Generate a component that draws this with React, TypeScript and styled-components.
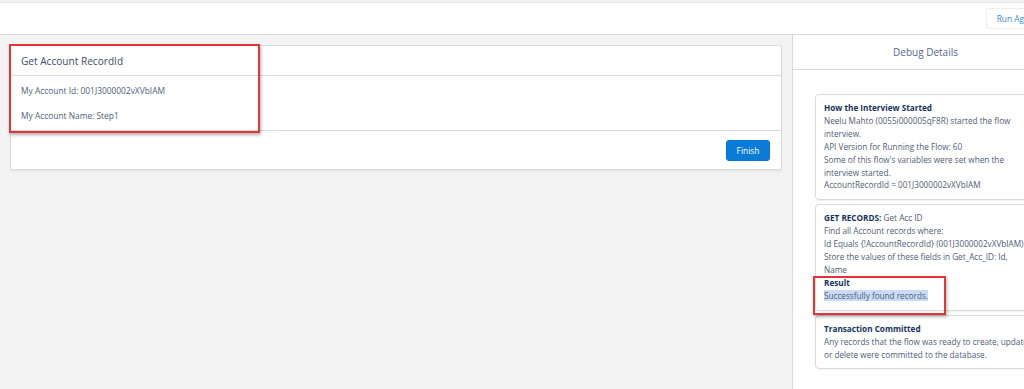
import React from "react";
import styled, { createGlobalStyle } from "styled-components";

const GlobalStyle = createGlobalStyle`
  html, body {
    margin: 0;
    padding: 0;
    background: #f3f3f3;
    overflow: hidden;
  }
  body {
    font-family: "Open Sans", "Noto Sans", "Liberation Sans", sans-serif;
  }
  * { box-sizing: border-box; }
`;

const Page = styled.div`
  width: 1058px;
  height: 389px;
  display: flex;
  flex-direction: column;
  background: #f3f3f3;
`;

const TopBar = styled.header`
  margin-top: 2px;
  height: 33px;
  flex: none;
  background: #fff;
  border-top: 1px solid #e4e4e4;
  border-bottom: 1px solid #dddbda;
  display: flex;
  align-items: center;
  justify-content: flex-end;
  padding-right: 11px;
`;

const RunButton = styled.button`
  height: 21px;
  padding: 0 10px;
  border: 1px solid #efeeed;
  border-radius: 3px;
  background: #fff;
  color: #3b8ce0;
  font-family: inherit;
  font-size: 8.4px;
  line-height: 19px;
`;

const Main = styled.main`
  flex: 1;
  display: grid;
  grid-template-columns: 792px 266px;
  min-height: 0;
`;

const LeftArea = styled.section`
  padding: 10px;
  align-self: start;
`;

const Card = styled.div`
  position: relative;
  background: #fff;
  border: 1px solid #dddbda;
  border-radius: 2px;
  box-shadow: 0 2px 2px rgba(0, 0, 0, 0.05);
`;

const CardHeader = styled.div`
  height: 30px;
  padding: 0 10px;
  display: flex;
  align-items: center;
  border-bottom: 1px solid #dddbda;
  font-size: 10.1px;
  color: #3e4d66;
`;

const CardBody = styled.div`
  padding: 8px 10px;
  display: flex;
  flex-direction: column;
  gap: 12px;
  border-bottom: 1px solid #dddbda;
`;

const Field = styled.div`
  font-size: 8.4px;
  line-height: 13px;
  color: #4f5e78;
  white-space: nowrap;
`;

const CardFooter = styled.div`
  padding: 9px 11px 8px;
  display: flex;
  justify-content: flex-end;
`;

const FinishButton = styled.button`
  width: 44px;
  height: 21px;
  padding: 0;
  border: 1px solid #0176d3;
  border-radius: 3px;
  background: #0b7bd8;
  color: #fff;
  font-family: inherit;
  font-size: 8.4px;
`;

const Annotation = styled.div<{ $l: number; $t: number; $w: number; $h: number }>`
  position: absolute;
  left: ${(p) => p.$l}px;
  top: ${(p) => p.$t}px;
  width: ${(p) => p.$w}px;
  height: ${(p) => p.$h}px;
  border: 2px solid #e3343a;
  box-shadow: 1px 2px 3px rgba(0, 0, 0, 0.3);
  pointer-events: none;
`;

const RightPanel = styled.aside`
  background: #fff;
  border-left: 1px solid #dddbda;
  display: flex;
  flex-direction: column;
`;

const PanelHeader = styled.div`
  height: 35px;
  flex: none;
  border-bottom: 1px solid #dddbda;
  display: flex;
  align-items: center;
  justify-content: center;
  font-size: 10px;
  color: #54698d;
`;

const PanelBody = styled.div`
  padding: 24px 22px;
  display: flex;
  flex-direction: column;
  gap: 4px;
`;

const DebugCard = styled.div`
  border: 1px solid #dddbda;
  border-radius: 4px;
  padding: 7px 8px;
  box-shadow: 0 1px 2px rgba(0, 0, 0, 0.06);
  font-size: 8.2px;
  line-height: 12.9px;
  color: #4f5d75;
`;

const Line = styled.div`
  white-space: nowrap;
`;

const Strong = styled.span`
  font-weight: 700;
  color: #16325c;
`;

const ResultBlock = styled.div`
  position: relative;
`;

const Selected = styled.span`
  background: #cadcf5;
`;

export default function App() {
  return (
    <>
      <GlobalStyle />
      <Page>
        <TopBar>
          <RunButton>Run Again</RunButton>
        </TopBar>
        <Main>
          <LeftArea>
            <Card>
              <CardHeader>Get Account RecordId</CardHeader>
              <CardBody>
                <Field>My Account Id: 001J3000002vXVbIAM</Field>
                <Field>My Account Name: Step1</Field>
              </CardBody>
              <CardFooter>
                <FinishButton>Finish</FinishButton>
              </CardFooter>
              <Annotation $l={-2} $t={-2} $w={251} $h={89} />
            </Card>
          </LeftArea>
          <RightPanel>
            <PanelHeader>Debug Details</PanelHeader>
            <PanelBody>
              <DebugCard>
                <Line>
                  <Strong>How the Interview Started</Strong>
                </Line>
                <Line>Neelu Mahto (0055i000005qF8R) started the flow</Line>
                <Line>interview.</Line>
                <Line>API Version for Running the Flow: 60</Line>
                <Line>Some of this flow's variables were set when the</Line>
                <Line>interview started.</Line>
                <Line>AccountRecordId = 001J3000002vXVbIAM</Line>
              </DebugCard>
              <DebugCard>
                <Line>
                  <Strong>GET RECORDS:</Strong> Get Acc ID
                </Line>
                <Line>Find all Account records where:</Line>
                <Line>Id Equals {"{!AccountRecordId}"} (001J3000002vXVbIAM)</Line>
                <Line>Store the values of these fields in Get_Acc_ID: Id,</Line>
                <Line>Name</Line>
                <ResultBlock>
                  <Line>
                    <Strong>Result</Strong>
                  </Line>
                  <Line>
                    <Selected>Successfully found records.</Selected>
                  </Line>
                  <Annotation $l={-11} $t={-1} $w={133} $h={39} />
                </ResultBlock>
              </DebugCard>
              <DebugCard>
                <Line>
                  <Strong>Transaction Committed</Strong>
                </Line>
                <Line>Any records that the flow was ready to create, update,</Line>
                <Line>or delete were committed to the database.</Line>
              </DebugCard>
            </PanelBody>
          </RightPanel>
        </Main>
      </Page>
    </>
  );
}
